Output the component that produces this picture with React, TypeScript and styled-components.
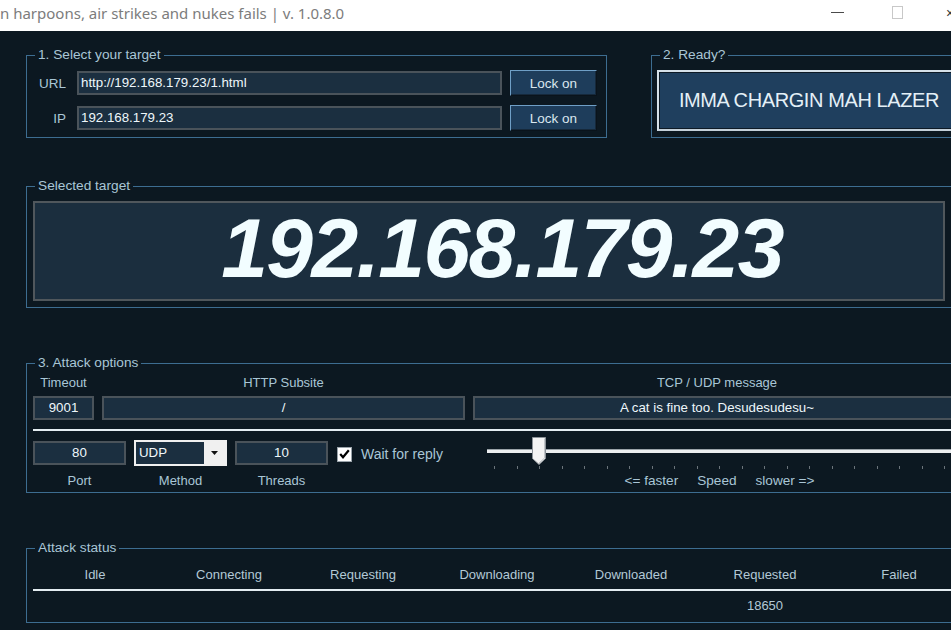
import styled, { createGlobalStyle } from "styled-components";

const GlobalStyle = createGlobalStyle`
  html, body {
    margin: 0;
    padding: 0;
    background: #0c1821;
    overflow: hidden;
  }
  #root {
    width: 951px;
    height: 630px;
    overflow: hidden;
  }
`;

const font = `"Liberation Sans", Arial, sans-serif`;

const Window = styled.div`
  width: 951px;
  height: 630px;
  background: #0c1821;
  font-family: ${font};
  overflow: hidden;
`;

const TitleBar = styled.div`
  height: 31px;
  background: #ffffff;
  display: flex;
  align-items: center;
  overflow: hidden;
`;

const TitleText = styled.span`
  font-family: "Noto Sans", "Open Sans", sans-serif;
  font-size: 15px;
  color: #7c7c7c;
  white-space: nowrap;
  margin-top: -6px;
`;

const Controls = styled.div`
  margin-left: auto;
  margin-right: -5px;
  margin-top: -6px;
  display: flex;
  align-items: center;
`;

const MinIcon = styled.span`
  width: 13px;
  height: 1px;
  background: #4a4a4a;
  margin-right: 48px;
`;

const MaxIcon = styled.span`
  width: 9px;
  height: 11px;
  border: 1px solid #c8c8c8;
  margin-right: 43px;
`;

const CloseIcon = styled.span`
  width: 10px;
  font-size: 14px;
  color: #333;
  line-height: 1;
`;

const Content = styled.div`
  padding-left: 26px;
`;

const TopRow = styled.div`
  display: flex;
  gap: 44px;
  margin-top: 16px;
`;

const Group = styled.fieldset<{ $width: number }>`
  box-sizing: border-box;
  width: ${(p) => p.$width}px;
  flex-shrink: 0;
  margin: 0;
  min-width: 0;
  border: 1px solid #3d6d91;
  padding: 7px 8px 6px 6px;
`;

const Legend = styled.legend<{ $indent?: number }>`
  margin-left: ${(p) => p.$indent ?? 2}px;
  padding: 0 3px;
  font-size: 13.7px;
  line-height: 16px;
  color: #a9c6d6;
`;

const TargetRows = styled.div`
  display: flex;
  flex-direction: column;
  gap: 9px;
`;

const FieldRow = styled.div`
  display: flex;
  align-items: center;
  height: 26px;
`;

const RowLabel = styled.span`
  width: 33px;
  margin-right: 11px;
  text-align: right;
  font-size: 13.5px;
  color: #a9c6d6;
`;

const TextBox = styled.div<{ $width: number; $center?: boolean; $height?: number }>`
  box-sizing: border-box;
  width: ${(p) => p.$width}px;
  height: ${(p) => p.$height ?? 24}px;
  background: #1b2f40;
  border: 2px solid #4a535a;
  color: #eef7fb;
  font-size: 13.3px;
  line-height: ${(p) => (p.$height ?? 24) - 4}px;
  padding: 0 2px;
  text-align: ${(p) => (p.$center ? "center" : "left")};
  white-space: nowrap;
  overflow: hidden;
  flex-shrink: 0;
`;

const LockButton = styled.button`
  box-sizing: border-box;
  width: 87px;
  height: 26px;
  margin-left: 8px;
  background: #1e3d5b;
  border: 1px solid;
  border-color: #6f9fc6 #0a131b #0a131b #6f9fc6;
  box-shadow: inset -1px -1px 0 #16293b;
  color: #dae7ef;
  font-family: ${font};
  font-size: 13.5px;
  padding: 0;
`;

const ReadyButton = styled.button`
  box-sizing: border-box;
  width: 304px;
  height: 61px;
  background: #1f3f5e;
  border: 2px solid;
  border-color: #d6e1e9 #b8c6d1 #c3d0da #d6e1e9;
  box-shadow: inset 1px 1px 0 #0d1a26, inset -1px -1px 0 #0d1a26;
  color: #e4f0f7;
  font-family: ${font};
  font-size: 20px;
  letter-spacing: -0.4px;
  padding: 0;
`;

const Display = styled.div`
  box-sizing: border-box;
  width: 912px;
  height: 100px;
  background: #1b2e3e;
  border: 2px solid #50575c;
  display: flex;
  align-items: center;
  justify-content: center;
`;

const BigIp = styled.span`
  font-size: 84px;
  font-weight: bold;
  font-style: italic;
  letter-spacing: -1.6px;
  line-height: 1;
  color: #f2fdff;
  margin-top: -6px;
  margin-left: 26px;
`;

const OptionsTop = styled.div`
  display: grid;
  grid-template-columns: 61px 363px 488px;
  column-gap: 8px;
  row-gap: 6px;
`;

const ColLabel = styled.span`
  font-size: 13px;
  line-height: 14px;
  text-align: center;
  color: #a9c6d6;
  white-space: nowrap;
`;

const Divider = styled.div<{ $gapTop: number; $indent?: number }>`
  height: 2px;
  background: #e4ecf1;
  margin-top: ${(p) => p.$gapTop}px;
  margin-left: ${(p) => p.$indent ?? 0}px;
`;

const OptionsBottom = styled.div`
  display: flex;
  align-items: flex-start;
  margin-top: 9px;
`;

const Control = styled.div`
  display: flex;
  flex-direction: column;
  align-items: center;
  gap: 8px;
  width: 93px;
  margin-right: 8px;
`;

const ControlBox = styled.div`
  height: 26px;
  display: flex;
  align-items: center;
`;

const Select = styled.div`
  box-sizing: border-box;
  width: 93px;
  height: 26px;
  border: 2px solid #f0f0f0;
  display: flex;
  background: #1b2f40;
`;

const SelectValue = styled.span`
  flex: 1;
  padding-left: 3px;
  font-size: 13.3px;
  line-height: 22px;
  color: #f2f8fb;
`;

const SelectArrow = styled.span`
  width: 21px;
  background: #f0f0f0;
  display: flex;
  align-items: center;
  justify-content: center;
`;

const CheckGroup = styled.div`
  width: 150px;
  height: 26px;
  margin-left: 1px;
  display: flex;
  align-items: center;
  gap: 9px;
`;

const CheckBox = styled.span`
  box-sizing: border-box;
  width: 15px;
  height: 15px;
  background: #ffffff;
  border: 1px solid #9aa3aa;
  display: flex;
  align-items: center;
  justify-content: center;
  margin-top: 2px;
`;

const CheckText = styled.span`
  font-size: 14px;
  color: #a9c6d6;
  margin-top: 2px;
`;

const Slider = styled.div`
  width: 465px;
  display: flex;
  flex-direction: column;
  margin-top: -4px;
`;

const TrackArea = styled.div`
  position: relative;
  height: 30px;
`;

const Track = styled.div`
  position: absolute;
  left: 0;
  right: 0;
  top: 13px;
  height: 3px;
  background: #eceef0;
  border-top: 1px solid #9aa2a8;
`;

const Thumb = styled.svg`
  position: absolute;
  left: 45px;
  top: 1px;
`;

const Ticks = styled.div`
  display: flex;
  justify-content: space-between;
  padding: 0 7px;
  height: 3px;
`;

const Tick = styled.span`
  width: 1px;
  height: 3px;
  background: #6b747b;
`;

const SpeedLabels = styled.div`
  display: flex;
  justify-content: center;
  gap: 19px;
  margin-top: 5px;
  font-size: 13.6px;
  line-height: 14px;
  color: #a9c6d6;
`;

const StatusGrid = styled.div<{ $gapTop?: number }>`
  display: grid;
  grid-template-columns: repeat(7, 134px);
  margin-top: ${(p) => p.$gapTop ?? 0}px;
  font-size: 13px;
  line-height: 14px;
  color: #b3c9d6;
  text-align: center;
`;

const statusCols = [
  "Idle",
  "Connecting",
  "Requesting",
  "Downloading",
  "Downloaded",
  "Requested",
  "Failed",
];
const statusValues = ["", "", "", "", "", "18650", ""];

export default function App() {
  return (
    <Window>
      <GlobalStyle />
      <TitleBar>
        <TitleText>n harpoons, air strikes and nukes fails | v. 1.0.8.0</TitleText>
        <Controls>
          <MinIcon />
          <MaxIcon />
          <CloseIcon>×</CloseIcon>
        </Controls>
      </TitleBar>

      <Content>
        <TopRow>
          <Group $width={581}>
            <Legend>1. Select your target</Legend>
            <TargetRows>
              <FieldRow>
                <RowLabel>URL</RowLabel>
                <TextBox $width={425}>http://192.168.179.23/1.html</TextBox>
                <LockButton>Lock on</LockButton>
              </FieldRow>
              <FieldRow>
                <RowLabel>IP</RowLabel>
                <TextBox $width={425}>192.168.179.23</TextBox>
                <LockButton>Lock on</LockButton>
              </FieldRow>
            </TargetRows>
          </Group>

          <Group $width={330} style={{ paddingLeft: 5 }}>
            <Legend $indent={3}>2. Ready?</Legend>
            <ReadyButton>IMMA CHARGIN MAH LAZER</ReadyButton>
          </Group>
        </TopRow>

        <Group $width={927} style={{ marginTop: 40, padding: "7px 6px 6px 6px" }}>
          <Legend>Selected target</Legend>
          <Display>
            <BigIp>192.168.179.23</BigIp>
          </Display>
        </Group>

        <Group $width={960} style={{ marginTop: 47, padding: "5px 6px 4px 6px" }}>
          <Legend>3. Attack options</Legend>
          <OptionsTop>
            <ColLabel>Timeout</ColLabel>
            <ColLabel>HTTP Subsite</ColLabel>
            <ColLabel>TCP / UDP message</ColLabel>
            <TextBox $width={61} $center>9001</TextBox>
            <TextBox $width={363} $center>/</TextBox>
            <TextBox $width={488} $center>A cat is fine too. Desudesudesu~</TextBox>
          </OptionsTop>
          <Divider $gapTop={9} />
          <OptionsBottom>
            <Control>
              <ControlBox>
                <TextBox $width={93} $center>80</TextBox>
              </ControlBox>
              <ColLabel>Port</ColLabel>
            </Control>
            <Control>
              <Select>
                <SelectValue>UDP</SelectValue>
                <SelectArrow>
                  <svg width="7" height="4" viewBox="0 0 7 4">
                    <path d="M0 0 H7 L3.5 4 Z" fill="#111" />
                  </svg>
                </SelectArrow>
              </Select>
              <ColLabel>Method</ColLabel>
            </Control>
            <Control>
              <ControlBox>
                <TextBox $width={93} $center>10</TextBox>
              </ControlBox>
              <ColLabel>Threads</ColLabel>
            </Control>
            <CheckGroup>
              <CheckBox>
                <svg width="11" height="10" viewBox="0 0 11 10">
                  <path d="M1.2 5 L4 8.2 L9.8 1.2" fill="none" stroke="#000" strokeWidth="2.2" />
                </svg>
              </CheckBox>
              <CheckText>Wait for reply</CheckText>
            </CheckGroup>
            <Slider>
              <TrackArea>
                <Track />
                <Thumb width="14" height="28" viewBox="0 0 14 28">
                  <path d="M0.5 0.5 H13.5 V21.5 L7 27.5 L0.5 21.5 Z" fill="#f3f3f3" stroke="#8c9298" />
                  <path d="M12.5 1.5 V21 L7 26" fill="none" stroke="#c2c6c9" />
                </Thumb>
              </TrackArea>
              <Ticks>
                {Array.from({ length: 21 }, (_, i) => (
                  <Tick key={i} />
                ))}
              </Ticks>
              <SpeedLabels>
                <span>&lt;= faster</span>
                <span>Speed</span>
                <span>slower =&gt;</span>
              </SpeedLabels>
            </Slider>
          </OptionsBottom>
        </Group>

        <Group $width={960} style={{ marginTop: 47, padding: "12px 6px 9px 1px" }}>
          <Legend $indent={7}>Attack status</Legend>
          <StatusGrid>
            {statusCols.map((c) => (
              <span key={c}>{c}</span>
            ))}
          </StatusGrid>
          <Divider $gapTop={7} $indent={5} />
          <StatusGrid $gapTop={8}>
            {statusValues.map((v, i) => (
              <span key={i}>{v || "\u00a0"}</span>
            ))}
          </StatusGrid>
        </Group>
      </Content>
    </Window>
  );
}
